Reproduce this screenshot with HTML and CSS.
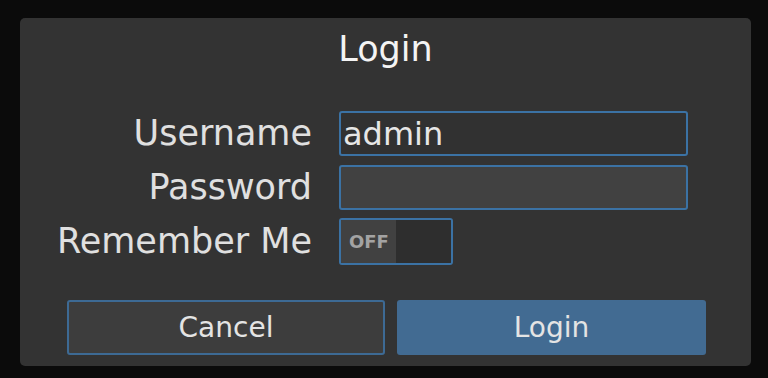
FILE: index.html
```html
<!DOCTYPE html>
<html lang="en">
<head>
    <meta charset="UTF-8">
    <title>Login</title>
    <link rel="stylesheet" href="styles.css">
</head>
<body>

<div class="dialog">
    <h1>Login</h1>
    <div class="form">
        <label for="username">Username</label>
        <input id="username" class="field" type="text" value="admin">
        <label for="password">Password</label>
        <input id="password" class="field field-dark" type="password">
        <label>Remember Me</label>
        <div class="toggle">
            <span class="toggle-off">OFF</span>
            <span class="toggle-rest"></span>
        </div>
    </div>
    <div class="buttons">
        <button class="cancel-btn">Cancel</button>
        <button class="login-btn">Login</button>
    </div>
</div>

</body>
</html>
```

FILE: styles.css
```css
body {
    margin: 0;
    background-color: #0b0b0b;
    font-family: "DejaVu Sans", sans-serif;
    color: #e2e2e2;
}
.dialog {
    margin: 18px 0 0 20px;
    width: 731px;
    height: 348px;
    box-sizing: border-box;
    padding-top: 11px;
    background-color: #333333;
    border-radius: 5px;
}
h1 {
    margin: 0;
    font-size: 35px;
    font-weight: normal;
    line-height: 41px;
    text-align: center;
    color: #f4f4f4;
}
.form {
    display: grid;
    grid-template-columns: 292px 349px;
    grid-auto-rows: 45px;
    column-gap: 27px;
    row-gap: 9px;
    margin-top: 41px;
}
.form label {
    font-size: 35px;
    text-align: right;
    align-self: center;
    line-height: 45px;
    color: #e0e0e0;
}
.field {
    box-sizing: border-box;
    width: 349px;
    height: 45px;
    margin: 0;
    padding: 0 2px;
    border: 2px solid #3b72a4;
    border-radius: 3px;
    background-color: #313131;
    font-family: "DejaVu Sans", sans-serif;
    font-size: 32px;
    color: #e6e6e6;
    outline: none;
}
.field-dark {
    background-color: #414141;
}
.toggle {
    display: flex;
    box-sizing: border-box;
    width: 114px;
    height: 47px;
    margin-top: -1px;
    border: 2px solid #3b72a4;
    border-radius: 3px;
    overflow: hidden;
}
.toggle-off {
    width: 55px;
    padding-left: 8px;
    box-sizing: border-box;
    background-color: #414141;
    font-size: 18px;
    font-weight: bold;
    line-height: 43px;
    color: #a3a3a3;
}
.toggle-rest {
    flex: 1;
    background-color: #2e2e2e;
}
.buttons {
    display: flex;
    gap: 12px;
    margin: 36px 0 0 47px;
}
.cancel-btn, .login-btn {
    height: 55px;
    border-radius: 3px;
    font-family: "DejaVu Sans", sans-serif;
    font-size: 28px;
    color: #e4e4e4;
    cursor: pointer;
}
.cancel-btn {
    width: 318px;
    background-color: #3d3d3d;
    border: 2px solid #3d6a94;
}
.login-btn {
    width: 309px;
    background-color: #426b92;
    border: none;
}
```
